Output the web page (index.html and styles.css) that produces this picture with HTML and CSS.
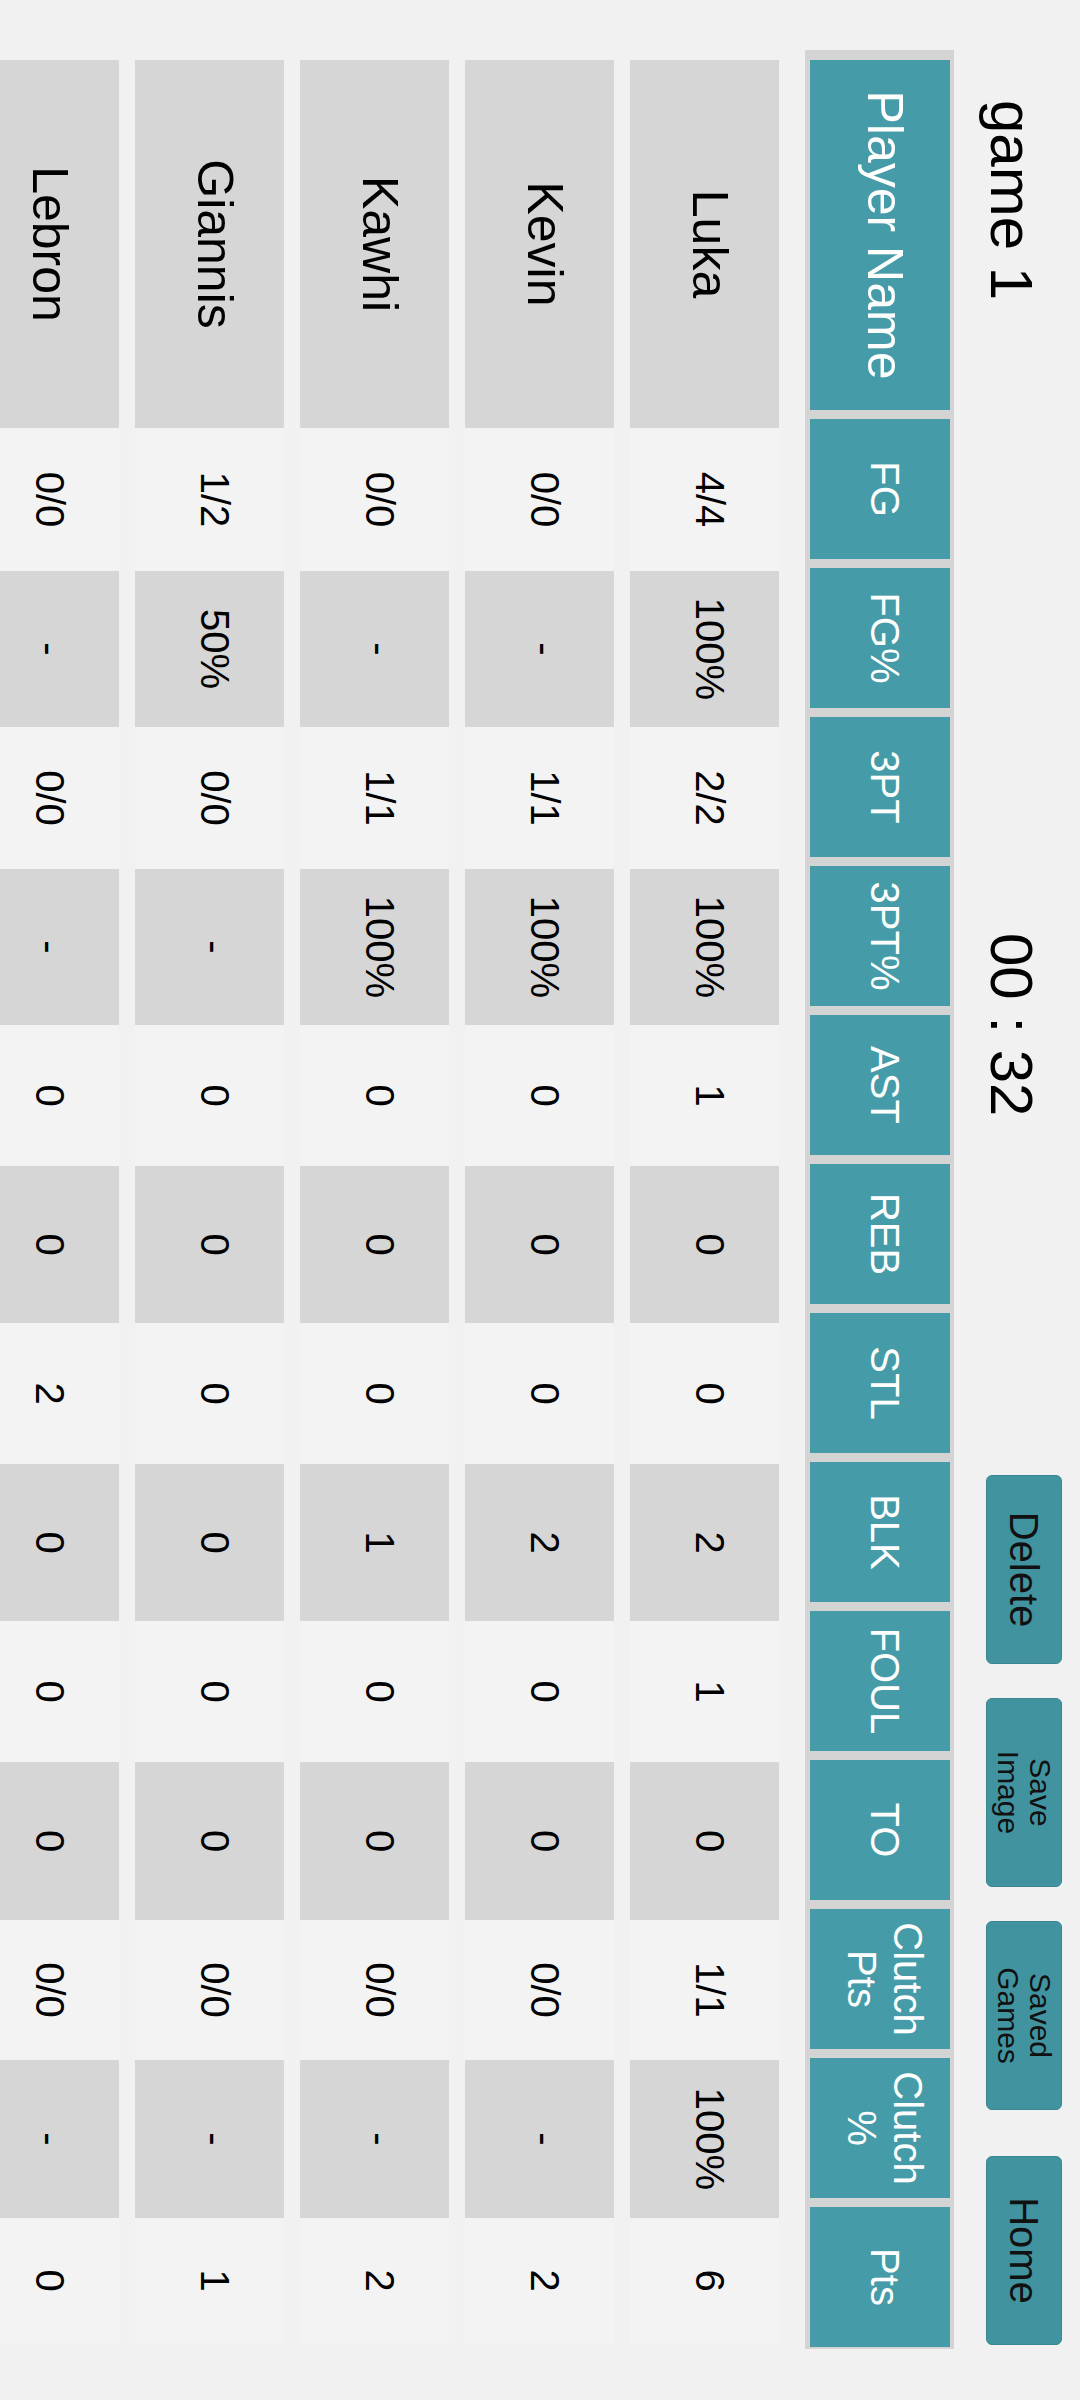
FILE: index.html
```html
<!DOCTYPE html>
<html lang="en">
<head>
<meta charset="utf-8">
<title>game 1</title>
<link rel="stylesheet" href="styles.css">
</head>
<body>
<div class="stage">
  <header class="topbar">
    <h1 class="title">game 1</h1>
    <div class="timer">00 : 32</div>
    <nav class="actions">
      <button class="btn">Delete</button>
      <button class="btn btn-small">Save Image</button>
      <button class="btn btn-small">Saved Games</button>
      <button class="btn btn-home">Home</button>
    </nav>
  </header>

  <section class="board">
    <div class="head">
      <div class="th th-name">Player Name</div>
      <div class="th">FG</div>
      <div class="th">FG%</div>
      <div class="th">3PT</div>
      <div class="th">3PT%</div>
      <div class="th">AST</div>
      <div class="th">REB</div>
      <div class="th">STL</div>
      <div class="th">BLK</div>
      <div class="th">FOUL</div>
      <div class="th">TO</div>
      <div class="th">Clutch Pts</div>
      <div class="th">Clutch %</div>
      <div class="th">Pts</div>
    </div>

    <div class="rows">
      <div class="row">
        <div class="td td-name">Luka</div><div class="td">4/4</div><div class="td">100%</div><div class="td">2/2</div><div class="td">100%</div><div class="td">1</div><div class="td">0</div><div class="td">0</div><div class="td">2</div><div class="td">1</div><div class="td">0</div><div class="td">1/1</div><div class="td">100%</div><div class="td">6</div>
      </div>
      <div class="row">
        <div class="td td-name">Kevin</div><div class="td">0/0</div><div class="td">-</div><div class="td">1/1</div><div class="td">100%</div><div class="td">0</div><div class="td">0</div><div class="td">0</div><div class="td">2</div><div class="td">0</div><div class="td">0</div><div class="td">0/0</div><div class="td">-</div><div class="td">2</div>
      </div>
      <div class="row">
        <div class="td td-name">Kawhi</div><div class="td">0/0</div><div class="td">-</div><div class="td">1/1</div><div class="td">100%</div><div class="td">0</div><div class="td">0</div><div class="td">0</div><div class="td">1</div><div class="td">0</div><div class="td">0</div><div class="td">0/0</div><div class="td">-</div><div class="td">2</div>
      </div>
      <div class="row">
        <div class="td td-name">Giannis</div><div class="td">1/2</div><div class="td">50%</div><div class="td">0/0</div><div class="td">-</div><div class="td">0</div><div class="td">0</div><div class="td">0</div><div class="td">0</div><div class="td">0</div><div class="td">0</div><div class="td">0/0</div><div class="td">-</div><div class="td">1</div>
      </div>
      <div class="row">
        <div class="td td-name">Lebron</div><div class="td">0/0</div><div class="td">-</div><div class="td">0/0</div><div class="td">-</div><div class="td">0</div><div class="td">0</div><div class="td">2</div><div class="td">0</div><div class="td">0</div><div class="td">0</div><div class="td">0/0</div><div class="td">-</div><div class="td">0</div>
      </div>
    </div>
  </section>
</div>
</body>
</html>
```
FILE: styles.css
```css
html, body {
  margin: 0;
  padding: 0;
  width: 1080px;
  height: 2400px;
  overflow: hidden;
  background: #f1f1f1;
}

body {
  font-family: "Liberation Sans", Arial, sans-serif;
  color: #000;
}

/* The app is a landscape screen shown rotated a quarter turn clockwise */
.stage {
  box-sizing: border-box;
  width: 2400px;
  height: 1080px;
  padding: 18px 52px 0 50px;
  overflow: hidden;
  transform-origin: 0 0;
  transform: translateX(1080px) rotate(90deg);
  background: #f1f1f1;
}

.topbar {
  display: grid;
  grid-template-columns: 883px auto 1fr;
  align-items: start;
  height: 76px;
}

.title {
  margin: 21px 0 0 50px;
  font-size: 60px;
  line-height: 60px;
  font-weight: normal;
}

.timer {
  margin-top: 21px;
  font-size: 60px;
  line-height: 60px;
  white-space: pre;
}

.actions {
  justify-self: end;
  display: flex;
  gap: 34px;
  margin-right: 3px;
}

.btn {
  box-sizing: border-box;
  width: 189px;
  height: 76px;
  padding: 0 22px;
  border: 1px solid #3a8791;
  border-radius: 6px;
  background: #41949f;
  color: #111;
  font-family: "Liberation Sans", Arial, sans-serif;
  font-size: 40px;
  line-height: 1;
}

.btn-small {
  font-size: 30px;
  line-height: 32px;
}

.btn-home {
  margin-left: 12px;
}

.board {
  margin-top: 32px;
}

.head {
  display: grid;
  grid-template-columns: 350px repeat(13, 140px);
  gap: 9px;
  width: max-content;
  padding: 4px 2px 5px 10px;
  background: #d4d4d4;
}

.th {
  box-sizing: border-box;
  display: flex;
  align-items: center;
  justify-content: center;
  height: 140px;
  padding-bottom: 10px;
  background: #459ca8;
  color: #fff;
  font-size: 40px;
  line-height: 46px;
  text-align: center;
}

.th-name {
  font-size: 50px;
}

.rows {
  display: flex;
  flex-direction: column;
  gap: 16px;
  margin-top: 26px;
  padding-left: 10px;
}

.row {
  display: grid;
  grid-template-columns: 368px 143px 156px 142px 156px 141px 157px 141px 157px 141px 158px 140px 158px 125px;
  height: 149px;
  flex: none;
}

.td {
  box-sizing: border-box;
  display: flex;
  align-items: center;
  justify-content: center;
  padding-bottom: 11px;
  font-size: 40px;
  white-space: nowrap;
}

.td:nth-child(odd) {
  background: #d6d6d6;
}

.td:nth-child(even) {
  background: #f3f3f3;
}

.td-name {
  font-size: 50px;
}
```
